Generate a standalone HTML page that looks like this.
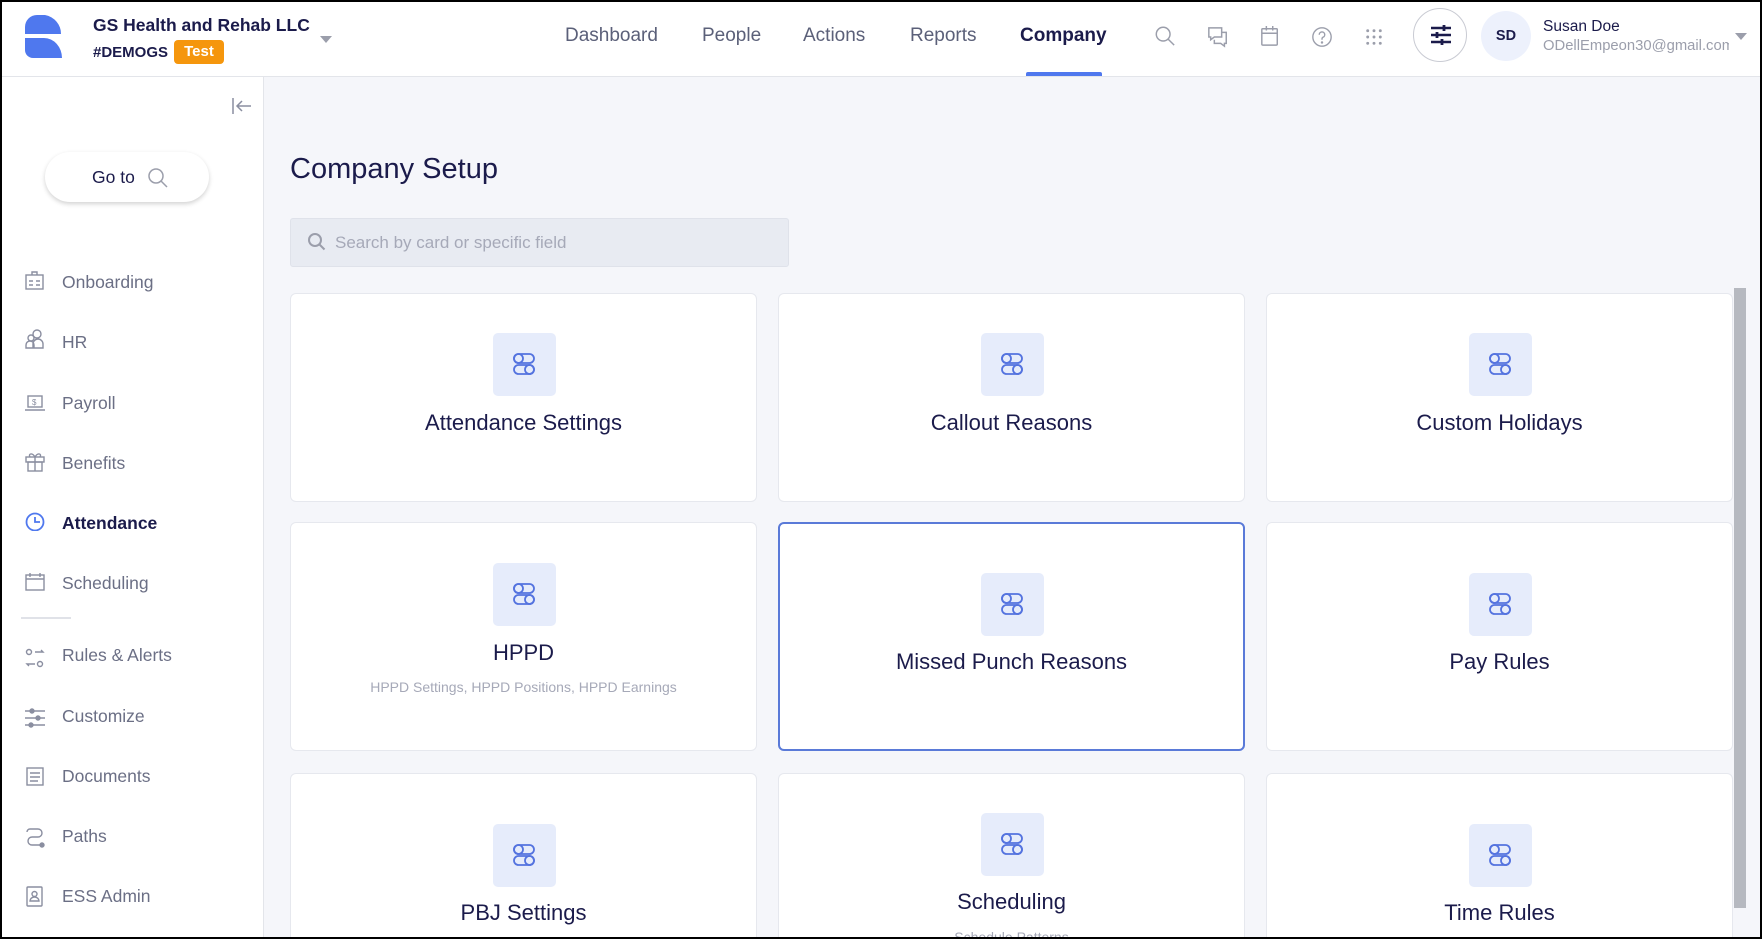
<!DOCTYPE html>
<html><head><meta charset="utf-8"><style>
*{box-sizing:border-box;margin:0;padding:0}
body{width:1762px;height:939px;overflow:hidden;background:#000;font-family:"Liberation Sans",sans-serif;position:relative}
#frame{position:absolute;left:2px;top:2px;width:1758px;height:935px;background:#f5f6fa;overflow:hidden}
.abs{position:absolute}
#hdr{left:0;top:0;width:1758px;height:75px;background:#fff;border-bottom:1px solid #e3e5ea}
#side{left:0;top:75px;width:262px;height:860px;background:#fff;border-right:1px solid #e3e5ea}
.nav{position:absolute;top:23px;font-size:19px;color:#5b6079}
.mi{position:absolute;left:60px;font-size:17.5px;color:#6b6f85}
.card{position:absolute;background:#fff;border:1px solid #e6e8ee;border-radius:6px;width:467px}
.ib{position:absolute;left:50%;margin-left:-31px;width:63px;height:63px;background:#e6ecfb;border-radius:5px}
.ib svg{position:absolute;left:19px;top:19px}
.ct{position:absolute;left:0;width:100%;text-align:center;font-size:22px;color:#1b1b4b}
.cs{position:absolute;left:0;width:100%;text-align:center;font-size:14px;color:#a6a9b8}
</style></head><body><div id="frame">
<div id="hdr" class="abs">
<svg class="abs" style="left:23px;top:13px" width="40" height="45" viewBox="0 0 40 45"><path d="M0 19 V12 A12 12 0 0 1 12 0 H20 A20 19 0 0 1 36 19 Z" fill="#4f78ee"/><path d="M0 23 H19 A18 20 0 0 1 37 43 H8 A8 8 0 0 1 0 35 Z" fill="#4f78ee"/></svg>
<div class="abs" style="left:91px;top:13px;font-size:17.5px;font-weight:bold;color:#1b1b4b">GS Health and Rehab LLC</div>
<div class="abs" style="left:91px;top:42px;font-size:15px;font-weight:bold;color:#1b1b4b">#DEMOGS</div>
<div class="abs" style="left:172px;top:38px;width:50px;height:24px;background:#f5960d;border-radius:4px;color:#fff;font-size:15px;font-weight:bold;text-align:center;line-height:24px">Test</div>
<div class="abs" style="left:318px;top:34px;width:0;height:0;border-left:6px solid transparent;border-right:6px solid transparent;border-top:7px solid #9b9eab"></div>
<div class="nav" style="left:563px">Dashboard</div>
<div class="nav" style="left:700px">People</div>
<div class="nav" style="left:801px">Actions</div>
<div class="nav" style="left:908px">Reports</div>
<div class="nav" style="left:1018px;color:#1b1b4b;font-weight:bold">Company</div>
<div class="abs" style="left:1024px;top:70px;width:76px;height:4px;background:#4f78ee;border-radius:2px 2px 0 0"></div>
<svg class="abs" style="left:1152px;top:23px" width="22" height="22" viewBox="0 0 24 24" fill="none" stroke="#9b9eab" stroke-width="1.6"><circle cx="10" cy="10" r="7.5"/><path d="M15.5 15.5 L22 22"/></svg>
<svg class="abs" style="left:1205px;top:24px" width="22" height="22" viewBox="0 0 24 24" fill="none" stroke="#9b9eab" stroke-width="1.6"><path d="M2 2h14v10H8l-4 3v-3H2z"/><path d="M16 7h5v12h-2v3l-4-3H8v-4"/></svg>
<svg class="abs" style="left:1258px;top:23px" width="20" height="22" viewBox="0 0 22 24" fill="none" stroke="#9b9eab" stroke-width="1.6"><rect x="2" y="4" width="17" height="18" rx="1"/><path d="M2 9h17M7 1v5M14 1v5"/></svg>
<svg class="abs" style="left:1309px;top:24px" width="22" height="22" viewBox="0 0 24 24" fill="none" stroke="#9b9eab" stroke-width="1.5"><circle cx="12" cy="12" r="10"/><path d="M9 9.5a3 3 0 1 1 4 2.8c-.8.4-1 1-1 2v.7"/><circle cx="12" cy="18" r=".6" fill="#9b9eab"/></svg>
<svg class="abs" style="left:1363px;top:26px" width="18" height="18" viewBox="0 0 20 20" fill="#9b9eab"><circle cx="3" cy="3" r="1.6"/><circle cx="10" cy="3" r="1.6"/><circle cx="17" cy="3" r="1.6"/><circle cx="3" cy="10" r="1.6"/><circle cx="10" cy="10" r="1.6"/><circle cx="17" cy="10" r="1.6"/><circle cx="3" cy="17" r="1.6"/><circle cx="10" cy="17" r="1.6"/><circle cx="17" cy="17" r="1.6"/></svg>
<div class="abs" style="left:1411px;top:6px;width:54px;height:54px;border:1px solid #c9cbd3;border-radius:50%"></div>
<svg class="abs" style="left:1428px;top:22px" width="22" height="22" viewBox="0 0 22 22" stroke="#1b1b4b" stroke-width="2.4"><path d="M1 4h20M1 11h20M1 18h20"/><path d="M14 1v6M7 8v6M12 15v6" stroke-width="2.8"/></svg>
<div class="abs" style="left:1479px;top:9px;width:50px;height:50px;border-radius:50%;background:#edf1fc;text-align:center;line-height:50px;font-size:14.5px;font-weight:bold;color:#1b1b4b">SD</div>
<div class="abs" style="left:1541px;top:16px;font-size:15.5px;color:#1b1b4b">Susan Doe</div>
<div class="abs" style="left:1541px;top:36px;font-size:14.8px;color:#9b9eab;width:186px;overflow:hidden;white-space:nowrap">ODellEmpeon30@gmail.com</div>
<div class="abs" style="left:1733px;top:31px;width:0;height:0;border-left:6px solid transparent;border-right:6px solid transparent;border-top:7px solid #9b9eab"></div>
</div>
<div id="side" class="abs">
<svg class="abs" style="left:229px;top:19px" width="22" height="20" viewBox="0 0 22 20" fill="none" stroke="#8a8ea0" stroke-width="1.5"><path d="M2 2v16M20 10H6M11 5l-5 5 5 5"/></svg>
<div class="abs" style="left:43px;top:75px;width:164px;height:50px;border-radius:25px;background:#fff;box-shadow:0 2px 5px rgba(0,0,0,.18);font-size:17.5px;color:#1b1b4b;line-height:50px;padding-left:47px">Go to</div>
<svg class="abs" style="left:145px;top:90px" width="22" height="22" viewBox="0 0 22 22" fill="none" stroke="#9b9eab" stroke-width="1.5"><circle cx="9" cy="9" r="7"/><path d="M14 14l6 6"/></svg>
<div class="mi" style="top:195px">Onboarding</div>
<div class="mi" style="top:255px">HR</div>
<div class="mi" style="top:316px">Payroll</div>
<div class="mi" style="top:376px">Benefits</div>
<div class="mi" style="top:436px;color:#1b1b4b;font-weight:bold">Attendance</div>
<div class="mi" style="top:496px">Scheduling</div>
<div class="abs" style="left:19px;top:540px;width:50px;height:2px;background:#e0e2e8"></div>
<div class="mi" style="top:568px">Rules &amp; Alerts</div>
<div class="mi" style="top:629px">Customize</div>
<div class="mi" style="top:689px">Documents</div>
<div class="mi" style="top:749px">Paths</div>
<div class="mi" style="top:809px">ESS Admin</div>
<svg class="abs" style="left:22px;top:194px" width="22" height="260" viewBox="0 0 22 260" fill="none" stroke="#8a8ea0" stroke-width="1.4">
<rect x="2" y="4" width="17" height="14"/><path d="M8 4V1h5v3M5 10h4M5 14h4M12 10h4M12 14h4"/>
<circle cx="13" cy="63" r="4"/><circle cx="7" cy="67" r="3"/><path d="M2 77v-3a4 4 0 0 1 8 0v3zM9 77v-4a4 4 0 0 1 10 0v4z"/>
<rect x="4" y="125" width="14" height="11"/><path d="M1 139h20"/><text x="8" y="134" font-size="8" fill="#8a8ea0" stroke="none" font-family="Liberation Sans">$</text>
<rect x="2" y="186" width="18" height="5"/><rect x="4" y="191" width="14" height="9"/><path d="M11 186v14M11 186c-3-5-7-3-5 0M11 186c3-5 7-3 5 0"/>
<circle cx="11" cy="251" r="8.5" stroke="#4f78ee" stroke-width="1.8"/><path d="M11 246v5h5" stroke="#4f78ee" stroke-width="1.8"/>
</svg>
<svg class="abs" style="left:22px;top:494px" width="22" height="24" viewBox="0 0 22 24" fill="none" stroke="#8a8ea0" stroke-width="1.4"><rect x="2" y="4" width="18" height="15"/><path d="M2 8h18M6 2v4M16 2v4"/></svg>
<svg class="abs" style="left:22px;top:570px" width="22" height="22" viewBox="0 0 22 22" fill="none" stroke="#8a8ea0" stroke-width="1.4"><circle cx="5" cy="5" r="2.5"/><circle cx="16" cy="17" r="2.5"/><path d="M11 5h8l-2-2M11 17H3l2 2"/></svg>
<svg class="abs" style="left:22px;top:631px" width="22" height="20" viewBox="0 0 22 20" fill="none" stroke="#8a8ea0" stroke-width="1.4"><path d="M1 3h20M1 10h20M1 17h20"/><circle cx="8" cy="3" r="2" fill="#8a8ea0"/><circle cx="14" cy="10" r="2" fill="#8a8ea0"/><circle cx="7" cy="17" r="2" fill="#8a8ea0"/></svg>
<svg class="abs" style="left:22px;top:689px" width="22" height="22" viewBox="0 0 22 22" fill="none" stroke="#8a8ea0" stroke-width="1.4"><rect x="3" y="2" width="16" height="17"/><path d="M6 7h10M6 11h10M6 15h8"/></svg>
<svg class="abs" style="left:22px;top:750px" width="22" height="22" viewBox="0 0 22 22" fill="none" stroke="#8a8ea0" stroke-width="1.4"><path d="M3 5a3 3 0 0 1 3-3h8a4 4 0 0 1 0 8H8a4 4 0 0 0 0 8h8"/><circle cx="18" cy="18" r="2" fill="#8a8ea0"/></svg>
<svg class="abs" style="left:24px;top:809px" width="18" height="22" viewBox="0 0 18 22" fill="none" stroke="#8a8ea0" stroke-width="1.4"><rect x="1" y="1" width="15" height="19" rx="1"/><circle cx="8.5" cy="8" r="2.5"/><path d="M4 15a4.5 4 0 0 1 9 0z"/></svg>
</div>
<div class="abs" style="left:288px;top:151px;font-size:29px;color:#1b1b4b">Company Setup</div>
<div class="abs" style="left:288px;top:216px;width:499px;height:49px;background:#e8ebf2;border:1px solid #dfe2ea;border-radius:3px"></div>
<svg class="abs" style="left:305px;top:230px" width="20" height="20" viewBox="0 0 20 20" fill="none" stroke="#9b9eab" stroke-width="2"><circle cx="8" cy="8" r="6"/><path d="M12.5 12.5l5 5"/></svg>
<div class="abs" style="left:333px;top:231px;font-size:17px;color:#a6a9b8">Search by card or specific field</div>
<div class="abs" style="left:1732px;top:286px;width:12px;height:620px;background:#b6b9c0"></div>

<div class="card" style="left:288px;top:291px;height:209px"><div class="ib" style="top:39px"><svg width="24" height="24" viewBox="0 0 24 24" fill="none" stroke="#5473df" stroke-width="1.8"><rect x="2" y="2" width="20" height="9" rx="4.5"/><circle cx="6.5" cy="6.5" r="4.5"/><rect x="2" y="13" width="20" height="9" rx="4.5"/><circle cx="17.5" cy="17.5" r="4.5"/></svg></div><div class="ct" style="top:116px">Attendance Settings</div></div>
<div class="card" style="left:776px;top:291px;height:209px"><div class="ib" style="top:39px"><svg width="24" height="24" viewBox="0 0 24 24" fill="none" stroke="#5473df" stroke-width="1.8"><rect x="2" y="2" width="20" height="9" rx="4.5"/><circle cx="6.5" cy="6.5" r="4.5"/><rect x="2" y="13" width="20" height="9" rx="4.5"/><circle cx="17.5" cy="17.5" r="4.5"/></svg></div><div class="ct" style="top:116px">Callout Reasons</div></div>
<div class="card" style="left:1264px;top:291px;height:209px"><div class="ib" style="top:39px"><svg width="24" height="24" viewBox="0 0 24 24" fill="none" stroke="#5473df" stroke-width="1.8"><rect x="2" y="2" width="20" height="9" rx="4.5"/><circle cx="6.5" cy="6.5" r="4.5"/><rect x="2" y="13" width="20" height="9" rx="4.5"/><circle cx="17.5" cy="17.5" r="4.5"/></svg></div><div class="ct" style="top:116px">Custom Holidays</div></div>

<div class="card" style="left:288px;top:520px;height:229px"><div class="ib" style="top:40px"><svg width="24" height="24" viewBox="0 0 24 24" fill="none" stroke="#5473df" stroke-width="1.8"><rect x="2" y="2" width="20" height="9" rx="4.5"/><circle cx="6.5" cy="6.5" r="4.5"/><rect x="2" y="13" width="20" height="9" rx="4.5"/><circle cx="17.5" cy="17.5" r="4.5"/></svg></div><div class="ct" style="top:117px">HPPD</div><div class="cs" style="top:156px">HPPD Settings, HPPD Positions, HPPD Earnings</div></div>
<div class="card" style="left:776px;top:520px;height:229px;border:2px solid #5a7ad8"><div class="ib" style="top:49px"><svg width="24" height="24" viewBox="0 0 24 24" fill="none" stroke="#5473df" stroke-width="1.8"><rect x="2" y="2" width="20" height="9" rx="4.5"/><circle cx="6.5" cy="6.5" r="4.5"/><rect x="2" y="13" width="20" height="9" rx="4.5"/><circle cx="17.5" cy="17.5" r="4.5"/></svg></div><div class="ct" style="top:125px">Missed Punch Reasons</div></div>
<div class="card" style="left:1264px;top:520px;height:229px"><div class="ib" style="top:50px"><svg width="24" height="24" viewBox="0 0 24 24" fill="none" stroke="#5473df" stroke-width="1.8"><rect x="2" y="2" width="20" height="9" rx="4.5"/><circle cx="6.5" cy="6.5" r="4.5"/><rect x="2" y="13" width="20" height="9" rx="4.5"/><circle cx="17.5" cy="17.5" r="4.5"/></svg></div><div class="ct" style="top:126px">Pay Rules</div></div>

<div class="card" style="left:288px;top:771px;height:240px"><div class="ib" style="top:50px"><svg width="24" height="24" viewBox="0 0 24 24" fill="none" stroke="#5473df" stroke-width="1.8"><rect x="2" y="2" width="20" height="9" rx="4.5"/><circle cx="6.5" cy="6.5" r="4.5"/><rect x="2" y="13" width="20" height="9" rx="4.5"/><circle cx="17.5" cy="17.5" r="4.5"/></svg></div><div class="ct" style="top:126px">PBJ Settings</div></div>
<div class="card" style="left:776px;top:771px;height:240px"><div class="ib" style="top:39px"><svg width="24" height="24" viewBox="0 0 24 24" fill="none" stroke="#5473df" stroke-width="1.8"><rect x="2" y="2" width="20" height="9" rx="4.5"/><circle cx="6.5" cy="6.5" r="4.5"/><rect x="2" y="13" width="20" height="9" rx="4.5"/><circle cx="17.5" cy="17.5" r="4.5"/></svg></div><div class="ct" style="top:115px">Scheduling</div><div class="cs" style="top:155px">Schedule Patterns</div></div>
<div class="card" style="left:1264px;top:771px;height:240px"><div class="ib" style="top:50px"><svg width="24" height="24" viewBox="0 0 24 24" fill="none" stroke="#5473df" stroke-width="1.8"><rect x="2" y="2" width="20" height="9" rx="4.5"/><circle cx="6.5" cy="6.5" r="4.5"/><rect x="2" y="13" width="20" height="9" rx="4.5"/><circle cx="17.5" cy="17.5" r="4.5"/></svg></div><div class="ct" style="top:126px">Time Rules</div></div>
</div></body></html>
